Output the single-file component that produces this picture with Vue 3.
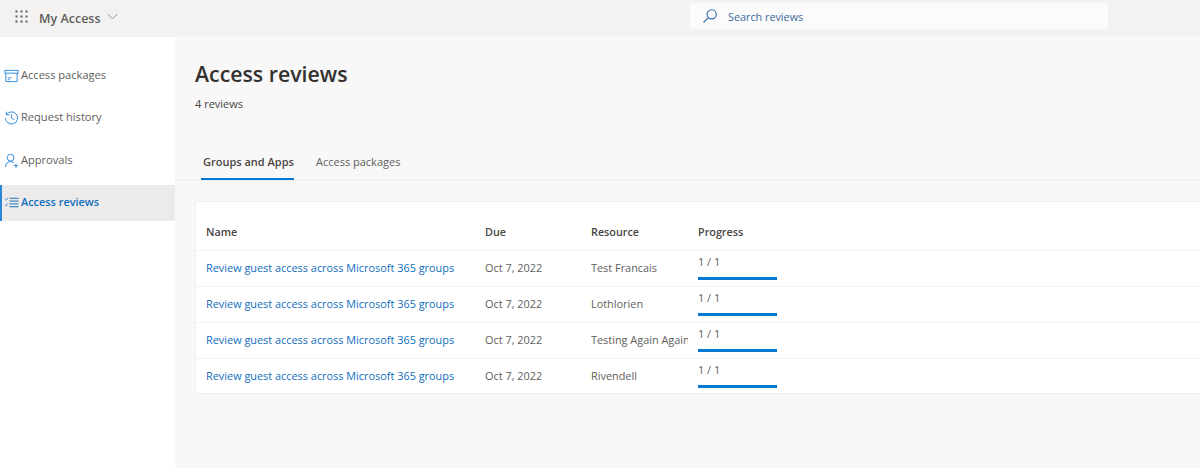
<script setup>
const nav = [
  { label: 'Access packages', icon: 'box' },
  { label: 'Request history', icon: 'history' },
  { label: 'Approvals', icon: 'person' },
  { label: 'Access reviews', icon: 'list', active: true }
]
const rows = ['Test Francais', 'Lothlorien', 'Testing Again Again', 'Rivendell']
</script>

<template>
  <div class="page">
    <header class="top">
      <div class="brand">
        <svg class="waffle" width="14" height="14" viewBox="0 0 14 14" fill="#605e5c">
          <template v-for="y in [1, 6, 11]" :key="y">
            <rect v-for="x in [1, 6, 11]" :key="x" :x="x - 0.5" :y="y - 0.5" width="2" height="2" />
          </template>
        </svg>
        <span class="app-name">My Access</span>
        <svg class="chev" width="11" height="7" viewBox="0 0 11 7" fill="none" stroke="#8a8886" stroke-width="0.9">
          <path d="M0.5 0.8 L5.5 5.8 L10.5 0.8" />
        </svg>
      </div>
      <div class="search">
        <svg width="16" height="16" viewBox="0 0 16 16" fill="none" stroke="#2b6cb0" stroke-width="1.1">
          <circle cx="9.7" cy="6.3" r="4.6" />
          <path d="M6.3 9.7 L1.5 14.5" />
        </svg>
        <span>Search reviews</span>
      </div>
    </header>
    <div class="body">
      <nav class="side">
        <a v-for="n in nav" :key="n.label" class="nav-item" :class="{ active: n.active }">
          <svg class="nav-icon" width="15" height="15" viewBox="0 0 16 16" fill="none" stroke="#2b88d8" stroke-width="1">
            <template v-if="n.icon === 'box'">
              <rect x="1" y="2.5" width="14" height="3" />
              <path d="M2 5.5 V14.5 H14 V5.5 M4 10.5 H8 M4 12.5 H6" />
            </template>
            <template v-else-if="n.icon === 'history'">
              <path d="M2.6 5 A6.5 6.5 0 1 1 1.6 8.5 M2.4 1.8 V5.2 H5.8 M8 4.5 V8.5 L11 10.5" />
            </template>
            <template v-else-if="n.icon === 'person'">
              <circle cx="7" cy="5" r="3.6" />
              <path d="M1.5 15 C1.8 11.2 4 9.2 7 9.2 C8.4 9.2 9.6 9.6 10.5 10.4 M10.5 13.5 H15 M12.8 11.3 V15.7" />
            </template>
            <template v-else>
              <path d="M6 3.5 H15.5 M6 6.5 H15.5 M6 9.5 H15.5 M6 12.5 H15.5" stroke="#106ebe" />
              <path d="M1 4.5 L2.3 5.6 L4.4 2.8 M1 10.5 L2.3 11.6 L4.4 8.8" stroke-width="0.9" />
            </template>
          </svg>
          <span class="nav-label">{{ n.label }}</span>
        </a>
      </nav>
      <main class="main">
        <h1>Access reviews</h1>
        <p class="count">4 reviews</p>
        <div class="tabs">
          <span class="tab on">Groups and Apps</span>
          <span class="tab">Access packages</span>
        </div>
        <section class="card">
          <div class="row head">
            <div class="c-name">Name</div>
            <div class="c-due">Due</div>
            <div class="c-res">Resource</div>
            <div class="c-prog">Progress</div>
          </div>
          <div v-for="r in rows" :key="r" class="row item">
            <div class="c-name link">Review guest access across Microsoft 365 groups</div>
            <div class="c-due lift">Oct 7, 2022</div>
            <div class="c-res clip lift">{{ r }}</div>
            <div class="c-prog">
              <div class="frac">1 / 1</div>
              <div class="bar"></div>
            </div>
          </div>
        </section>
      </main>
    </div>
  </div>
</template>

<style scoped>
.page {
  width: 1200px;
  height: 468px;
  overflow: hidden;
  display: flex;
  flex-direction: column;
  font-family: "Open Sans", "Noto Sans", sans-serif;
  font-size: 11px;
  color: #323130;
  background: #f8f8f8;
}
.top {
  height: 37px;
  flex: none;
  background: #f3f2f1;
  display: flex;
  align-items: center;
  position: relative;
}
.brand {
  display: flex;
  align-items: center;
  padding-left: 15px;
}
.waffle { margin-right: 10px; margin-top: -3px; }
.app-name {
  font-size: 12.5px;
  font-weight: 600;
  color: #605e5c;
  margin-top: -1px;
}
.chev { margin-left: 6px; margin-top: -4px; }
.search {
  position: absolute;
  left: 690px;
  top: 3px;
  width: 418px;
  height: 26px;
  background: #fbfbfb;
  border-radius: 2px;
  display: flex;
  align-items: center;
  gap: 10px;
  padding-left: 12px;
  box-sizing: border-box;
  color: #3d6a9c;
  font-size: 10.8px;
}
.body {
  flex: 1;
  display: flex;
  min-height: 0;
}
.side {
  width: 174.5px;
  flex: none;
  background: #fff;
  padding-top: 20px;
  box-sizing: border-box;
}
.nav-item {
  height: 36px;
  margin-bottom: 6.5px;
  display: flex;
  align-items: center;
  gap: 2px;
  padding-left: 4px;
  color: #605e5c;
  font-size: 11.1px;
  box-sizing: border-box;
}
.nav-icon { flex: none; }
.nav-label { margin-top: -2px; }
.nav-item.active {
  background: #edebe9;
  color: #106ebe;
  font-weight: 600;
  font-size: 10.9px;
  border-left: 2px solid #2b88d8;
  padding-left: 2px;
}
.main {
  flex: 1;
  min-width: 0;
  padding-top: 19px;
}
h1 {
  margin: 0 0 0 20.5px;
  font-size: 21.3px;
  line-height: 36px;
  font-weight: 600;
  color: #323130;
}
.count {
  margin: 3px 0 0 20.5px;
  font-size: 11px;
  line-height: 18px;
  color: #484644;
}
.tabs {
  margin-top: 31px;
  height: 36px;
  padding-left: 26.5px;
  display: flex;
  gap: 20px;
  border-bottom: 1px solid #eeeeee;
}
.tab {
  height: 36px;
  line-height: 36px;
  padding: 0 2px;
  font-size: 11px;
  color: #605e5c;
  box-sizing: border-box;
}
.tab.on {
  color: #484644;
  font-weight: 600;
  border-bottom: 2px solid #0078d4;
  width: 93px;
  white-space: nowrap;
}
.card {
  margin: 20px 0 0 20.5px;
  background: #fff;
  border: 1px solid #f0f0f0;
  border-right: 0;
  box-sizing: border-box;
  height: 193px;
}
.row {
  display: flex;
  padding-left: 10px;
}
.head {
  height: 48px;
  align-items: center;
  font-weight: 600;
  font-size: 10.8px;
  color: #484644;
  padding-top: 10px;
  box-sizing: border-box;
}
.item {
  height: 36px;
  border-top: 1px solid #f3f2f1;
  align-items: center;
  box-sizing: border-box;
  color: #605e5c;
  font-size: 10.9px;
}
.c-name { width: 279px; flex: none; white-space: nowrap; }
.c-due { width: 106px; flex: none; }
.c-res { width: 107px; flex: none; }
.clip { overflow: hidden; white-space: nowrap; width: 97px; margin-right: 10px; }
.c-prog { width: 80px; flex: none; }
.link { color: #106ebe; margin-top: -3px; }
.lift { margin-top: -2px; }
.frac { line-height: 14px; margin: -3px 0 0 0; }
.bar { height: 3px; background: #0078d4; width: 79px; margin-top: 8px; }
</style>
